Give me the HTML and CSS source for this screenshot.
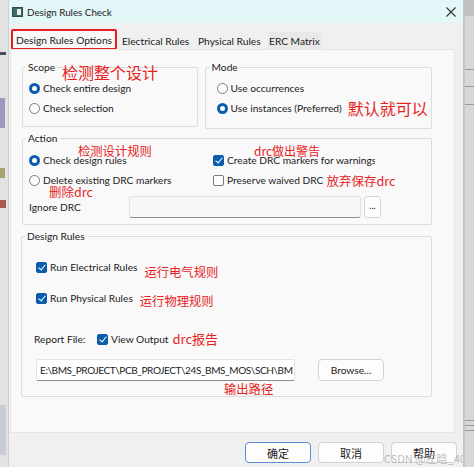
FILE: index.html
```html
<!DOCTYPE html>
<html>
<head>
<meta charset="utf-8">
<link rel="stylesheet" href="styles.css">
</head>
<body>
<div class="screen">
  <div class="bg-left">
    <span class="bl bl1"></span><span class="bl bl2"></span><span class="bl bl3"></span><span class="bl bl4"></span><span class="bl bl5"></span>
  </div>
  <div class="dialog">
    <div class="titlebar">
      <span class="app-icon"><span class="app-icon-in"></span></span>
      <span class="title">Design Rules Check</span>
      <span class="close">
        <svg width="12" height="12" viewBox="0 0 12 12"><path d="M1.5 1.5 L10.5 10.5 M10.5 1.5 L1.5 10.5" stroke="#333" stroke-width="1.1" fill="none"/></svg>
      </span>
    </div>
    <div class="tabs">
      <span class="tab active">Design Rules Options</span>
      <span class="tab t2">Electrical Rules</span>
      <span class="tab t3">Physical Rules</span>
      <span class="tab t4">ERC Matrix</span>
    </div>
    <div class="panel">
      <div class="row-top">
        <fieldset class="group scope">
          <legend>Scope</legend>
          <div class="opt"><span class="radio on"></span>Check entire design</div>
          <div class="opt"><span class="radio"></span>Check selection</div>
          <span class="note n-scope">检测整个设计</span>
        </fieldset>
        <fieldset class="group mode">
          <legend>Mode</legend>
          <div class="opt"><span class="radio"></span>Use occurrences</div>
          <div class="opt"><span class="radio on"></span>Use instances (Preferred)<span class="note-inline">默认就可以</span></div>
        </fieldset>
      </div>
      <fieldset class="group action">
        <legend>Action</legend>
        <div class="action-grid">
          <div class="opt"><span class="radio on"></span>Check design rules</div>
          <div class="opt"><span class="check on"></span><span class="clip">Create DRC markers for warnings</span></div>
          <div class="opt"><span class="radio"></span>Delete existing DRC markers</div>
          <div class="opt"><span class="check"></span>Preserve waived DRC<span class="note-inline small">放弃保存drc</span></div>
        </div>
        <div class="ignore-row">
          <span class="ignore-label">Ignore DRC</span>
          <span class="field ignore-field"></span>
          <span class="dots">...</span>
        </div>
        <span class="note n-check">检测设计规则</span>
        <span class="note n-delete">删除drc</span>
        <span class="note n-warn">drc做出警告</span>
      </fieldset>
      <fieldset class="group rules">
        <legend>Design Rules</legend>
        <div class="opt rule1"><span class="check on"></span>Run Electrical Rules<span class="note-inline r1">运行电气规则</span></div>
        <div class="opt rule2"><span class="check on"></span>Run Physical Rules<span class="note-inline r2">运行物理规则</span></div>
        <div class="report-row">
          <span class="report-label">Report File:</span>
          <span class="opt"><span class="check on"></span>View Output</span>
          <span class="note-inline rep">drc报告</span>
        </div>
        <div class="path-row">
          <span class="field path-field">E:\BMS_PROJECT\PCB_PROJECT\24S_BMS_MOS\SCH\BM</span>
          <span class="btn browse">Browse...</span>
        </div>
        <span class="note n-out">输出路径</span>
      </fieldset>
    </div>
    <div class="footer">
      <span class="btn fbtn default">确定</span>
      <span class="btn fbtn">取消</span>
      <span class="btn fbtn">帮助</span>
      <span class="watermark">CSDN @左晗_405</span>
    </div>
  </div>
  <div class="bg-right">
    <span class="rl rl0"></span>
    <span class="rl rl1"></span><span class="rl rl2"></span><span class="rl rl3"></span>
    <span class="rl rl4"></span><span class="rl rl5"></span><span class="rl rl6"></span>
  </div>
</div>
</body>
</html>
```

FILE: styles.css
```css
* { box-sizing: border-box; }
html, body { margin: 0; padding: 0; }
body {
  width: 474px;
  height: 467px;
  overflow: hidden;
  font-family: "Lato", "Noto Sans", "Noto Sans CJK SC", sans-serif;
  font-size: 10.2px;
  color: #1b1b1b;
  background: #e8e8e8;
}
.screen {
  display: flex;
  width: 474px;
  height: 467px;
}
.bg-left {
  width: 9px;
  flex: none;
  background: #e2e2e2;
  border-right: 1px solid #cfcfcf;
  position: relative;
}
.bl { position: absolute; left: 0; display: block; }
.bl1 { top: 52px; width: 6px; height: 3px; background: #4a4a60; }
.bl2 { top: 98px; width: 5px; height: 30px; background: #6b6ba8; opacity: .6; }
.bl3 { top: 168px; width: 5px; height: 10px; background: #8a8a40; opacity: .7; }
.bl4 { top: 200px; width: 6px; height: 8px; background: #9a3a2a; opacity: .8; }
.bl5 { top: 405px; width: 6px; height: 50px; background: #c8ccd8; }

.dialog {
  width: 454px;
  flex: none;
  background: #f0f0f0;
  display: flex;
  flex-direction: column;
}
.bg-right {
  flex: 1;
  background: #d8d8d8;
  border-left: 2px solid #c4c4c4;
  position: relative;
}
.rl { position: absolute; left: 0; right: 0; height: 1px; background: #9a9a9a; display: block; }
.rl0 { top: 0; height: 16px; background: #c0c0c0; }
.rl1 { top: 69px; }
.rl2 { top: 86px; }
.rl3 { top: 104px; }
.rl4 { top: 420px; }
.rl5 { top: 425px; }
.rl6 { top: 430px; }

/* title bar */
.titlebar {
  height: 23px;
  background: #e3f6f8;
  display: flex;
  align-items: center;
  padding-left: 3px;
  position: relative;
}
.app-icon {
  width: 11px;
  height: 10px;
  background: #3d6e66;
  border: 1px solid #2c4a46;
  display: flex;
  justify-content: flex-end;
  padding: 1px;
}
.app-icon-in { width: 4px; height: 100%; background: #e8f0ee; display: block; }
.title {
  margin-left: 4px;
  font-size: 9.8px;
  color: #222;
}
.close {
  margin-left: auto;
  margin-right: 6px;
  display: flex;
}

/* tabs */
.tabs {
  height: 26px;
  display: flex;
  align-items: flex-end;
  padding-left: 2px;
  white-space: nowrap;
}
.tab {
  height: 17px;
  display: flex;
  align-items: center;
  color: #1b1b1b;
  font-size: 10.2px;
  white-space: nowrap;
}
.tab.active {
  height: 21px;
  margin-bottom: -1px;
  border: 2px solid #e31f1f;
  border-radius: 2px;
  background: #f7f7f7;
  width: 106px;
  justify-content: center;
}
.t2 { margin-left: 5px; width: 66px; }
.t3 { margin-left: 10px; width: 62px; }
.t4 { margin-left: 8px; padding: 0 1px; background: #e9e9e9; }

/* panel */
.panel {
  height: 384px;
  margin-left: 1px;
  width: 445px;
  background: #f9f9f9;
  border: 1px solid #e6e6e6;
  padding: 10px 22px 0 11px;
}
.row-top {
  display: flex;
  align-items: flex-start;
  gap: 7px;
}
.group {
  margin: 0;
  border: 1px solid #dcdcdc;
  border-radius: 2px;
  min-width: 0;
  position: relative;
}
.group legend {
  padding: 0 2px;
  margin-left: -3px;
  line-height: 15px;
  font-size: 10.2px;
  color: #222;
}
.mode legend { margin-left: -7px; }
.rules legend { margin-left: -11px; }
.opt {
  display: flex;
  align-items: center;
  height: 20px;
  white-space: nowrap;
}
.scope { width: 176px; padding: 3px 6px 8px 6px; }
.mode { width: 228px; padding: 3px 6px 10px 11px; }

.radio {
  width: 11px;
  height: 11px;
  border-radius: 50%;
  border: 1px solid #7a7a7a;
  background: #fdfdfd;
  margin-right: 3px;
  flex: none;
}
.radio.on {
  border: 3px solid #0b5cad;
  background: #ffffff;
}
.check {
  width: 11px;
  height: 11px;
  border-radius: 2px;
  border: 1px solid #7a7a7a;
  background: #fdfdfd;
  margin-right: 3px;
  flex: none;
  position: relative;
}
.check.on {
  background: #0b5cad;
  border-color: #0b5cad;
}
.check.on::after {
  content: "";
  position: absolute;
  left: 3px;
  top: 0px;
  width: 3px;
  height: 6px;
  border-right: 1.3px solid #fff;
  border-bottom: 1.3px solid #fff;
  transform: rotate(40deg);
}

.note, .note-inline {
  color: #e8211c;
  font-family: "Noto Sans CJK SC", "Noto Sans", sans-serif;
  white-space: nowrap;
}
.note { position: absolute; line-height: 1; }
.note-inline { margin-left: 6px; font-size: 16px; }
.note-inline.small { font-size: 12.5px; margin-left: 3px; }
.n-scope { left: 39px; top: -11px; font-size: 16px; }

/* action */
.action {
  margin-top: 2px;
  padding: 4px 6px 6px 6px;
}
.action-grid {
  display: grid;
  grid-template-columns: 184px 1fr;
}
.clip { display: inline-block; width: 148px; overflow: hidden; }
.ignore-row {
  display: flex;
  align-items: center;
  height: 22px;
  margin-top: 6px;
}
.ignore-label { width: 100px; }
.field {
  height: 22px;
  background: #fbfbfb;
  border: 1px solid #e3e3e3;
  border-bottom: 1px solid #8c8c8c;
  border-radius: 3px;
  display: flex;
  align-items: center;
}
.ignore-field { width: 232px; background: #f7f7f7; }
.dots {
  width: 17px;
  height: 22px;
  margin-left: 3px;
  border: 1px solid #d6d6d6;
  border-radius: 3px;
  background: #fdfdfd;
  display: flex;
  align-items: center;
  justify-content: center;
  font-size: 9px;
  padding-bottom: 3px;
}
.n-check { left: 55px; top: -1px; font-size: 12.3px; }
.n-delete { left: 26px; top: 40px; font-size: 12.5px; }
.n-warn { left: 231px; top: -1px; font-size: 12px; }

/* design rules */
.rules {
  margin-top: 4px;
  margin-left: -1px;
  padding: 13px 6px 15px 14px;
}
.rule2 { margin-top: 11px; }
.note-inline.r1 { margin-left: 7px; margin-top: 9px; font-size: 12.3px; }
.note-inline.r2 { margin-left: 7px; margin-top: 5px; font-size: 12.3px; }
.report-row {
  display: flex;
  align-items: center;
  height: 20px;
  margin-top: 21px;
}
.report-label { width: 63px; margin-left: -2px; }
.note-inline.rep { font-size: 13px; margin-left: 4px; margin-top: -1px; }
.path-row {
  display: flex;
  align-items: center;
  margin-top: 10px;
}
.path-field {
  width: 259px;
  background: #ffffff;
  padding-left: 3px;
  font-size: 10px;
  letter-spacing: -0.4px;
  overflow: hidden;
  white-space: nowrap;
  border-radius: 2px;
}
.btn {
  height: 22px;
  background: #fdfdfd;
  border: 1px solid #d2d2d2;
  border-radius: 4px;
  display: flex;
  align-items: center;
  justify-content: center;
}
.browse { width: 66px; margin-left: 23px; font-size: 10.2px; }
.n-out { left: 202px; top: 139px; font-size: 12.3px; }

/* footer */
.footer {
  flex: 1;
  display: flex;
  align-items: flex-start;
  justify-content: flex-end;
  padding: 9px 6px 0 0;
  gap: 7px;
  position: relative;
}
.fbtn {
  width: 66px;
  height: 21px;
  font-family: "Noto Sans CJK SC", sans-serif;
  font-size: 11px;
}
.fbtn.default { border-color: #5a8fd6; }
.watermark {
  position: absolute;
  right: -9px;
  top: 17px;
  font-size: 11px;
  color: rgba(170,170,170,0.75);
  font-family: "Noto Sans CJK SC", sans-serif;
  white-space: nowrap;
}
```
